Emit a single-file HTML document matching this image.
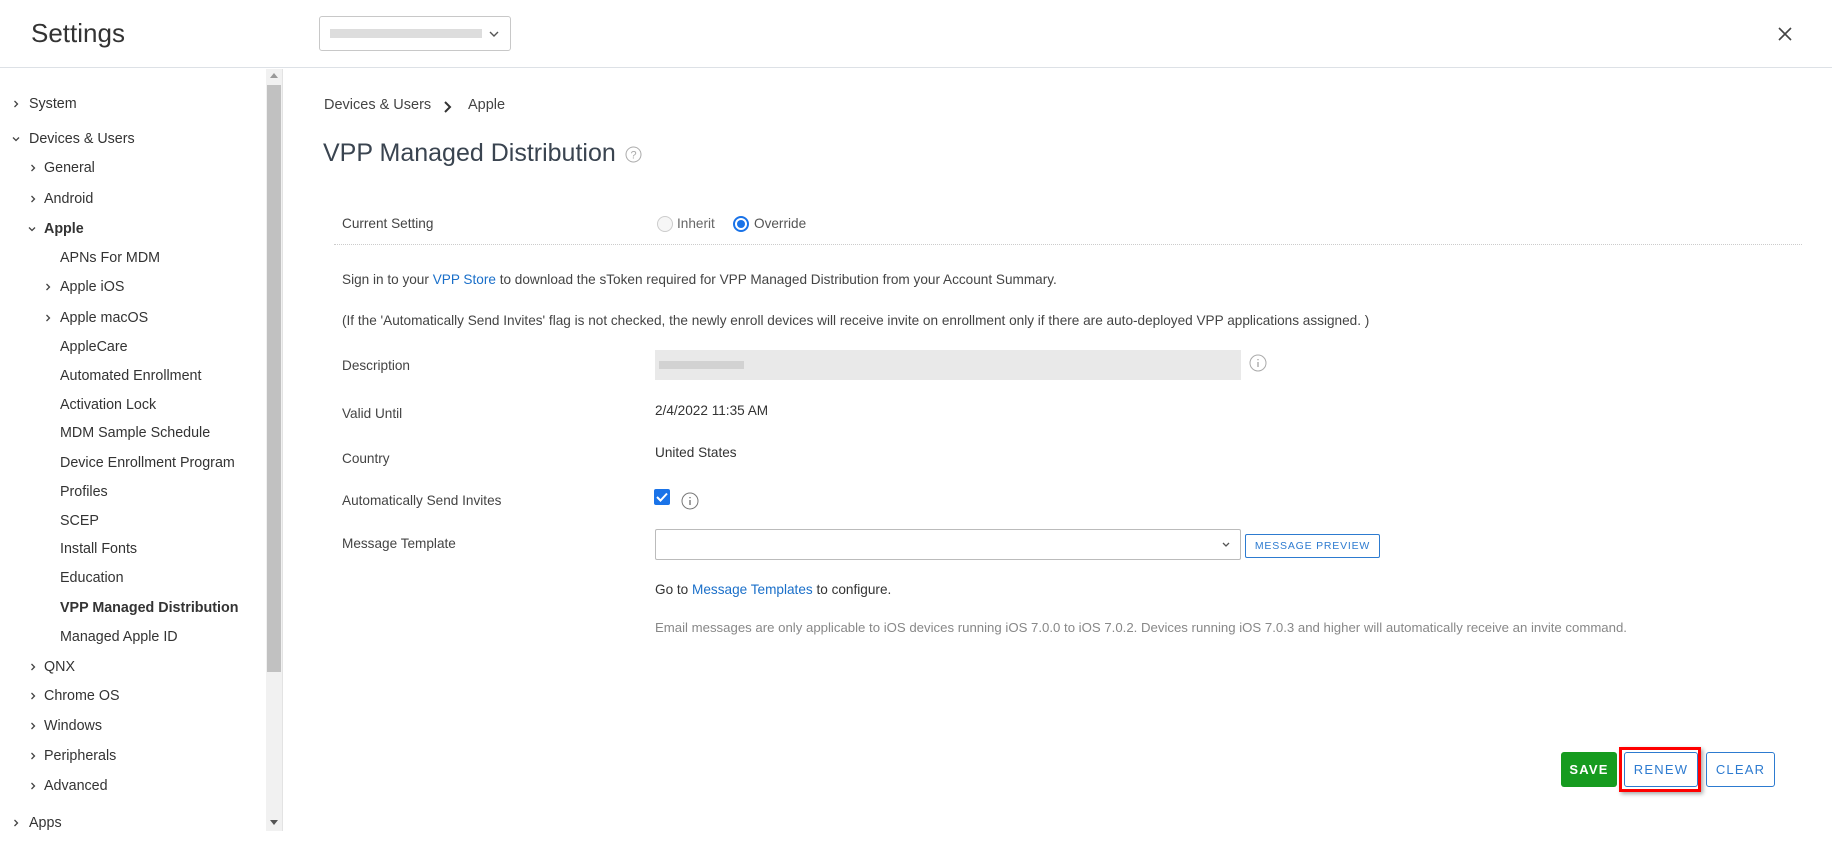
<!DOCTYPE html>
<html><head><meta charset="utf-8"><style>
*{box-sizing:border-box;margin:0;padding:0}
body{width:1832px;height:859px;background:#fff;font-family:"Liberation Sans",sans-serif;color:#3d3d3d;position:relative;overflow:hidden;font-size:14px}
.a{position:absolute;white-space:nowrap}
.hdr{position:absolute;left:0;top:0;width:1832px;height:68px;border-bottom:1px solid #dde1e6}
.side .a{font-size:14.3px;color:#333;line-height:18px}
.lbl{font-size:13.6px;color:#444;line-height:18px}
.btn{position:absolute;font-size:13px;font-weight:bold;letter-spacing:1.2px;text-align:center;border-radius:3px}
</style></head><body>
<svg width="0" height="0" style="position:absolute"><defs>
<symbol id="r" viewBox="0 0 8 8"><path d="M2.5 1l3 3-3 3" stroke="#444" stroke-width="1.3" fill="none"/></symbol>
<symbol id="d" viewBox="0 0 8 8"><path d="M1 2.5l3 3 3-3" stroke="#444" stroke-width="1.3" fill="none"/></symbol>
</defs></svg>
<div class="hdr"></div>
<div class="a" style="left:31px;top:18px;font-size:26px;color:#333">Settings</div>
<div class="a" style="left:319px;top:16px;width:192px;height:35px;border:1px solid #c8c8c8;border-radius:3px">
 <div class="a" style="left:10px;top:12px;width:152px;height:9px;background:#ddd"></div>
 <svg class="a" style="left:169px;top:13px" width="10" height="8"><path d="M1 2l4 4 4-4" stroke="#555" fill="none" stroke-width="1.4"/></svg>
</div>
<svg class="a" style="left:1777px;top:26px" width="16" height="16"><path d="M2 2l12 12M14 2L2 14" stroke="#444" stroke-width="1.6"/></svg>

<div class="a" style="left:0;top:69px;width:283px;height:762px;border-right:1px solid #e3e3e3"></div>
<div class="a" style="left:266px;top:69px;width:16px;height:762px;background:#f1f1f1"></div>
<div class="a" style="left:267px;top:85px;width:14px;height:587px;background:#c1c1c1"></div>
<div class="a" style="left:270px;top:73px;width:0;height:0;border-left:4px solid transparent;border-right:4px solid transparent;border-bottom:5px solid #999"></div>
<div class="a" style="left:270px;top:820px;width:0;height:0;border-left:4px solid transparent;border-right:4px solid transparent;border-top:5px solid #555"></div>

<div class="side">
<svg class="a" style="left:12px;top:100px" width="8" height="8"><use href="#r"/></svg><div class="a" style="left:29px;top:95px">System</div>
<svg class="a" style="left:12px;top:135px" width="8" height="8"><use href="#d"/></svg><div class="a" style="left:29px;top:130px">Devices &amp; Users</div>
<svg class="a" style="left:29px;top:164px" width="8" height="8"><use href="#r"/></svg><div class="a" style="left:44px;top:159px">General</div>
<svg class="a" style="left:29px;top:195px" width="8" height="8"><use href="#r"/></svg><div class="a" style="left:44px;top:190px">Android</div>
<svg class="a" style="left:28px;top:225px" width="8" height="8"><use href="#d"/></svg><div class="a" style="left:44px;top:220px;font-weight:bold">Apple</div>
<div class="a" style="left:60px;top:249px">APNs For MDM</div>
<svg class="a" style="left:44px;top:283px" width="8" height="8"><use href="#r"/></svg><div class="a" style="left:60px;top:278px">Apple iOS</div>
<svg class="a" style="left:44px;top:314px" width="8" height="8"><use href="#r"/></svg><div class="a" style="left:60px;top:309px">Apple macOS</div>
<div class="a" style="left:60px;top:338px">AppleCare</div>
<div class="a" style="left:60px;top:367px">Automated Enrollment</div>
<div class="a" style="left:60px;top:396px">Activation Lock</div>
<div class="a" style="left:60px;top:424px">MDM Sample Schedule</div>
<div class="a" style="left:60px;top:454px">Device Enrollment Program</div>
<div class="a" style="left:60px;top:483px">Profiles</div>
<div class="a" style="left:60px;top:512px">SCEP</div>
<div class="a" style="left:60px;top:540px">Install Fonts</div>
<div class="a" style="left:60px;top:569px">Education</div>
<div class="a" style="left:60px;top:599px;font-weight:bold">VPP Managed Distribution</div>
<div class="a" style="left:60px;top:628px">Managed Apple ID</div>
<svg class="a" style="left:29px;top:663px" width="8" height="8"><use href="#r"/></svg><div class="a" style="left:44px;top:658px">QNX</div>
<svg class="a" style="left:29px;top:692px" width="8" height="8"><use href="#r"/></svg><div class="a" style="left:44px;top:687px">Chrome OS</div>
<svg class="a" style="left:29px;top:722px" width="8" height="8"><use href="#r"/></svg><div class="a" style="left:44px;top:717px">Windows</div>
<svg class="a" style="left:29px;top:752px" width="8" height="8"><use href="#r"/></svg><div class="a" style="left:44px;top:747px">Peripherals</div>
<svg class="a" style="left:29px;top:782px" width="8" height="8"><use href="#r"/></svg><div class="a" style="left:44px;top:777px">Advanced</div>
<svg class="a" style="left:12px;top:819px" width="8" height="8"><use href="#r"/></svg><div class="a" style="left:29px;top:814px">Apps</div>
</div>

<div class="a" style="left:324px;top:97px;font-size:14.5px;color:#444">Devices &amp; Users</div>
<svg class="a" style="left:443px;top:101px" width="10" height="12"><path d="M2 1l5 5-5 5" stroke="#333" stroke-width="2" fill="none"/></svg>
<div class="a" style="left:468px;top:97px;font-size:14.5px;color:#444">Apple</div>
<div class="a" style="left:323px;top:139px;font-size:25px;color:#3a4450">VPP Managed Distribution</div>
<svg class="a" style="left:625px;top:146px" width="17" height="17"><circle cx="8.5" cy="8.5" r="7.5" stroke="#aaa" fill="none"/><text x="8.5" y="12.5" font-size="11" text-anchor="middle" fill="#aaa" font-family="Liberation Sans">?</text></svg>

<div class="a lbl" style="left:342px;top:215px">Current Setting</div>
<div class="a" style="left:657px;top:216px;width:16px;height:16px;border:1px solid #ccc;border-radius:50%;background:#f6f6f6"></div>
<div class="a lbl" style="left:677px;top:215px;color:#666">Inherit</div>
<div class="a" style="left:733px;top:216px;width:16px;height:16px;border:2px solid #1a73e8;border-radius:50%"><div style="margin:2px;width:8px;height:8px;border-radius:50%;background:#1a73e8"></div></div>
<div class="a lbl" style="left:754px;top:215px;color:#555">Override</div>
<div class="a" style="left:334px;top:244px;width:1468px;border-top:1px dotted #ccc"></div>

<div class="a lbl" style="left:342px;top:271px">Sign in to your <span style="color:#1a6fc9">VPP Store</span> to download the sToken required for VPP Managed Distribution from your Account Summary.</div>
<div class="a lbl" style="left:342px;top:312px">(If the 'Automatically Send Invites' flag is not checked, the newly enroll devices will receive invite on enrollment only if there are auto-deployed VPP applications assigned. )</div>

<div class="a lbl" style="left:342px;top:357px">Description</div>
<div class="a" style="left:655px;top:350px;width:586px;height:30px;background:#e9e9e9"><div class="a" style="left:4px;top:11px;width:85px;height:8px;background:#d2d2d2"></div></div>
<svg class="a" style="left:1249px;top:354px" width="18" height="18"><circle cx="9" cy="9" r="8" stroke="#aaa" fill="none"/><path d="M9 8v5M9 5v1.3" stroke="#aaa" stroke-width="1.4"/></svg>

<div class="a lbl" style="left:342px;top:405px">Valid Until</div>
<div class="a lbl" style="left:655px;top:402px;color:#333">2/4/2022 11:35 AM</div>
<div class="a lbl" style="left:342px;top:450px">Country</div>
<div class="a lbl" style="left:655px;top:444px;color:#333">United States</div>
<div class="a lbl" style="left:342px;top:492px">Automatically Send Invites</div>
<div class="a" style="left:654px;top:489px;width:16px;height:16px;background:#1a73e8;border-radius:2px"><svg width="16" height="16"><path d="M3 8l3.5 3.5L13 4.5" stroke="#fff" stroke-width="2" fill="none"/></svg></div>
<svg class="a" style="left:681px;top:492px" width="18" height="18"><circle cx="9" cy="9" r="8" stroke="#777" fill="none"/><path d="M9 8v5M9 5v1.3" stroke="#777" stroke-width="1.4"/></svg>

<div class="a lbl" style="left:342px;top:535px">Message Template</div>
<div class="a" style="left:655px;top:529px;width:586px;height:31px;border:1px solid #bbb;border-radius:2px"><svg class="a" style="left:566px;top:12px" width="8" height="6"><path d="M1 1l3 3 3-3" stroke="#555" fill="none" stroke-width="1.3"/></svg></div>
<div class="a" style="left:1245px;top:534px;width:135px;height:24px;border:1px solid #2d7bd0;border-radius:2px;font-size:10.5px;color:#2d7bd0;letter-spacing:.8px;text-align:center;line-height:22px">MESSAGE PREVIEW</div>

<div class="a lbl" style="left:655px;top:581px;color:#333">Go to <span style="color:#1a6fc9">Message Templates</span> to configure.</div>
<div class="a lbl" style="left:655px;top:619px;color:#888;font-size:13.2px">Email messages are only applicable to iOS devices running iOS 7.0.0 to iOS 7.0.2. Devices running iOS 7.0.3 and higher will automatically receive an invite command.</div>

<div class="btn" style="left:1561px;top:752px;width:56px;height:35px;background:#169b1f;color:#fff;line-height:35px">SAVE</div>
<div class="a" style="left:1619px;top:747px;width:82px;height:45px;border:3px solid #f00;box-shadow:2px 2px 4px rgba(0,0,0,.35)"></div>
<div class="btn" style="left:1624px;top:752px;width:74px;height:35px;border:1px solid #2d7bd0;color:#2d7bd0;line-height:33px;font-weight:normal">RENEW</div>
<div class="btn" style="left:1706px;top:752px;width:69px;height:35px;border:1px solid #2d7bd0;color:#2d7bd0;line-height:33px;font-weight:normal">CLEAR</div>
</body></html>
